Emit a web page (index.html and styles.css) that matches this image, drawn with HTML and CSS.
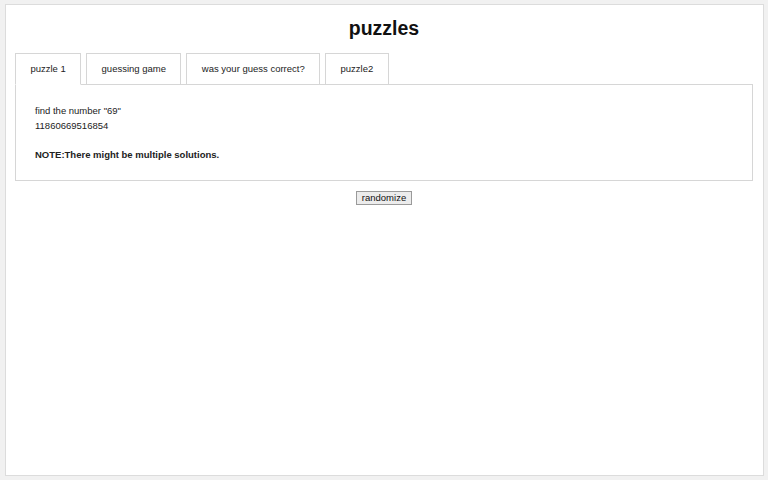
FILE: index.html
```html
<!DOCTYPE html>
<html>
<head>
<meta charset="utf-8">
<title>puzzles</title>
<link rel="stylesheet" href="styles.css">
</head>
<body>
<div class="page">
  <h1 class="title">puzzles</h1>
  <div class="tabs">
    <div class="tab active">puzzle 1</div>
    <div class="tab">guessing game</div>
    <div class="tab">was your guess correct?</div>
    <div class="tab">puzzle2</div>
  </div>
  <div class="panel">
    <p class="lines">find the number "69"<br>11860669516854</p>
    <p class="note">NOTE:There might be multiple solutions.</p>
  </div>
  <div class="actions">
    <button class="btn">randomize</button>
  </div>
</div>
</body>
</html>
```

FILE: styles.css
```css
html, body {
  margin: 0;
  padding: 0;
  height: 100%;
}
body {
  background: #f1f1f1;
  font-family: "Liberation Sans", Arial, sans-serif;
  color: #222;
  padding: 4px 4px 4px 5px;
  box-sizing: border-box;
}
.page {
  background: #fff;
  border: 1px solid #dcdcdc;
  height: 100%;
  box-sizing: border-box;
  padding: 0 10px 0 9px;
  display: flex;
  flex-direction: column;
}
.title {
  margin: 12px 0 13px;
  font-size: 19.5px;
  line-height: 23px;
  font-weight: bold;
  text-align: center;
  color: #111;
}
.tabs {
  display: flex;
  gap: 5px;
  margin-bottom: -1px;
  position: relative;
  z-index: 1;
}
.tab {
  height: 30px;
  line-height: 30px;
  padding: 0 14.4px;
  border: 1px solid #d6d6d6;
  font-size: 9.5px;
  color: #222;
  background: #fff;
}
.tab.active {
  border-bottom-color: #fff;
}
.panel {
  border: 1px solid #d6d6d6;
  padding: 18px 19px;
}
.lines {
  margin: 0;
  font-size: 9.5px;
  line-height: 15px;
}
.note {
  margin: 14px 0 0;
  font-size: 9.5px;
  line-height: 15px;
  font-weight: bold;
}
.actions {
  display: flex;
  justify-content: center;
  margin-top: 10px;
}
.btn {
  font-family: "Liberation Sans", Arial, sans-serif;
  font-size: 9.5px;
  line-height: 12px;
  padding: 0 5px;
  margin: 0;
  border: 1px solid #9a9a9a;
  background: #ececec;
  color: #111;
  border-radius: 0;
}
```
